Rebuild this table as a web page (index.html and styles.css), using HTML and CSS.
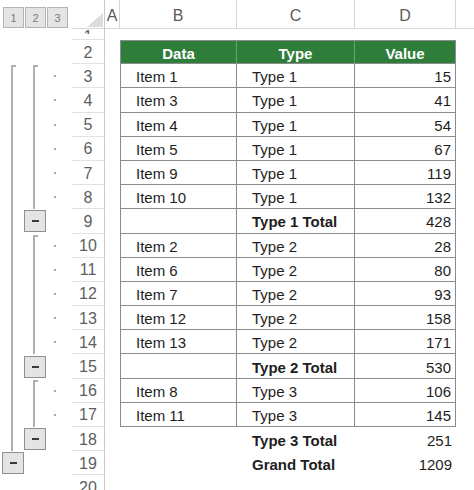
FILE: index.html
```html
<!DOCTYPE html>
<html>
<head>
<meta charset="utf-8">
<link rel="stylesheet" href="styles.css">
</head>
<body>
<div class="sheet">
  <div class="row head">
    <div class="levels"><span class="lv">1</span><span class="lv">2</span><span class="lv">3</span></div>
    <div class="corner"><i class="tri"></i></div>
    <div class="hc">A</div>
    <div class="hc">B</div>
    <div class="hc">C</div>
    <div class="hc">D</div>
    <div class="hc last"></div>
  </div>
  <div class="row r1">
    <div class="o o1"></div><div class="o o2"></div><div class="o o3"></div>
    <div class="rh rh1"><span>1</span></div>
    <div class="ca"></div><div></div><div></div><div></div><div></div>
  </div>
  <div class="row">
    <div class="o o1"></div><div class="o o2"></div><div class="o o3"></div>
    <div class="rh">2</div>
    <div class="ca"></div>
    <div class="c bd th first top">Data</div>
    <div class="c bd th top">Type</div>
    <div class="c bd th top">Value</div>
    <div></div>
  </div>
  <div class="row">
    <div class="o o1"><i class="s"></i></div><div class="o o2"><i class="s"></i></div><div class="o o3"><i class="d"></i></div>
    <div class="rh">3</div><div class="ca"></div>
    <div class="c bd first lt">Item 1</div><div class="c bd lt">Type 1</div><div class="c bd rt">15</div><div></div>
  </div>
  <div class="row">
    <div class="o o1"><i class="v"></i></div><div class="o o2"><i class="v"></i></div><div class="o o3"><i class="d"></i></div>
    <div class="rh">4</div><div class="ca"></div>
    <div class="c bd first lt">Item 3</div><div class="c bd lt">Type 1</div><div class="c bd rt">41</div><div></div>
  </div>
  <div class="row">
    <div class="o o1"><i class="v"></i></div><div class="o o2"><i class="v"></i></div><div class="o o3"><i class="d"></i></div>
    <div class="rh">5</div><div class="ca"></div>
    <div class="c bd first lt">Item 4</div><div class="c bd lt">Type 1</div><div class="c bd rt">54</div><div></div>
  </div>
  <div class="row">
    <div class="o o1"><i class="v"></i></div><div class="o o2"><i class="v"></i></div><div class="o o3"><i class="d"></i></div>
    <div class="rh">6</div><div class="ca"></div>
    <div class="c bd first lt">Item 5</div><div class="c bd lt">Type 1</div><div class="c bd rt">67</div><div></div>
  </div>
  <div class="row">
    <div class="o o1"><i class="v"></i></div><div class="o o2"><i class="v"></i></div><div class="o o3"><i class="d"></i></div>
    <div class="rh">7</div><div class="ca"></div>
    <div class="c bd first lt">Item 9</div><div class="c bd lt">Type 1</div><div class="c bd rt">119</div><div></div>
  </div>
  <div class="row">
    <div class="o o1"><i class="v"></i></div><div class="o o2"><i class="v"></i></div><div class="o o3"><i class="d"></i></div>
    <div class="rh">8</div><div class="ca"></div>
    <div class="c bd first lt">Item 10</div><div class="c bd lt">Type 1</div><div class="c bd rt">132</div><div></div>
  </div>
  <div class="row">
    <div class="o o1"><i class="v"></i></div><div class="o o2"><b class="mb"></b></div><div class="o o3"></div>
    <div class="rh">9</div><div class="ca"></div>
    <div class="c bd first lt"></div><div class="c bd lt bold">Type 1 Total</div><div class="c bd rt">428</div><div></div>
  </div>
  <div class="row">
    <div class="o o1"><i class="v"></i></div><div class="o o2"><i class="s"></i></div><div class="o o3"><i class="d"></i></div>
    <div class="rh">10</div><div class="ca"></div>
    <div class="c bd first lt">Item 2</div><div class="c bd lt">Type 2</div><div class="c bd rt">28</div><div></div>
  </div>
  <div class="row">
    <div class="o o1"><i class="v"></i></div><div class="o o2"><i class="v"></i></div><div class="o o3"><i class="d"></i></div>
    <div class="rh">11</div><div class="ca"></div>
    <div class="c bd first lt">Item 6</div><div class="c bd lt">Type 2</div><div class="c bd rt">80</div><div></div>
  </div>
  <div class="row">
    <div class="o o1"><i class="v"></i></div><div class="o o2"><i class="v"></i></div><div class="o o3"><i class="d"></i></div>
    <div class="rh">12</div><div class="ca"></div>
    <div class="c bd first lt">Item 7</div><div class="c bd lt">Type 2</div><div class="c bd rt">93</div><div></div>
  </div>
  <div class="row">
    <div class="o o1"><i class="v"></i></div><div class="o o2"><i class="v"></i></div><div class="o o3"><i class="d"></i></div>
    <div class="rh">13</div><div class="ca"></div>
    <div class="c bd first lt">Item 12</div><div class="c bd lt">Type 2</div><div class="c bd rt">158</div><div></div>
  </div>
  <div class="row">
    <div class="o o1"><i class="v"></i></div><div class="o o2"><i class="v"></i></div><div class="o o3"><i class="d"></i></div>
    <div class="rh">14</div><div class="ca"></div>
    <div class="c bd first lt">Item 13</div><div class="c bd lt">Type 2</div><div class="c bd rt">171</div><div></div>
  </div>
  <div class="row">
    <div class="o o1"><i class="v"></i></div><div class="o o2"><b class="mb"></b></div><div class="o o3"></div>
    <div class="rh">15</div><div class="ca"></div>
    <div class="c bd first lt"></div><div class="c bd lt bold">Type 2 Total</div><div class="c bd rt">530</div><div></div>
  </div>
  <div class="row">
    <div class="o o1"><i class="v"></i></div><div class="o o2"><i class="s"></i></div><div class="o o3"><i class="d"></i></div>
    <div class="rh">16</div><div class="ca"></div>
    <div class="c bd first lt">Item 8</div><div class="c bd lt">Type 3</div><div class="c bd rt">106</div><div></div>
  </div>
  <div class="row">
    <div class="o o1"><i class="v"></i></div><div class="o o2"><i class="v"></i></div><div class="o o3"><i class="d"></i></div>
    <div class="rh">17</div><div class="ca"></div>
    <div class="c bd first lt">Item 11</div><div class="c bd lt">Type 3</div><div class="c bd rt">145</div><div></div>
  </div>
  <div class="row">
    <div class="o o1"><i class="v"></i></div><div class="o o2"><b class="mb"></b></div><div class="o o3"></div>
    <div class="rh">18</div><div class="ca"></div>
    <div class="c lt"></div><div class="c lt bold">Type 3 Total</div><div class="c rt">251</div><div></div>
  </div>
  <div class="row">
    <div class="o o1"><b class="mb"></b></div><div class="o o2"></div><div class="o o3"></div>
    <div class="rh">19</div><div class="ca"></div>
    <div class="c lt"></div><div class="c lt bold">Grand Total</div><div class="c rt">1209</div><div></div>
  </div>
  <div class="row">
    <div class="o o1"></div><div class="o o2"></div><div class="o o3"></div>
    <div class="rh">20</div><div class="ca"></div>
    <div></div><div></div><div></div><div></div>
  </div>
</div>
</body>
</html>
```
FILE: styles.css
```css
* { box-sizing: border-box; }
body {
  margin: 0;
  background: #fff;
  font-family: "Liberation Sans", Arial, sans-serif;
}
.sheet {
  width: 474px;
  height: 490px;
  overflow: hidden;
}
.row {
  display: grid;
  grid-template-columns: 24px 22px 26px 33px 15px 117px 118px 101px 1fr;
  height: 24.2px;
}
.row.head { height: 29px; }
.row.r1 { height: 11px; }

/* level buttons */
.levels {
  grid-column: span 3;
  display: flex;
  gap: 1px;
  padding: 7px 0 0 3px;
}
.lv {
  width: 21px;
  height: 21px;
  border: 1px solid #b4b4b4;
  background: #e4e4e4;
  color: #7a7a7a;
  font-size: 11px;
  display: flex;
  align-items: center;
  justify-content: center;
}
.corner {
  border-right: 1px solid #c9c9c9;
  border-bottom: 1px solid #d6d6d6;
  display: flex;
  justify-content: flex-end;
  align-items: flex-end;
  padding: 0 1px 1px 0;
}
.tri {
  width: 16px;
  height: 14px;
  background: #dcdcdc;
  clip-path: polygon(100% 0, 100% 100%, 0 100%);
}
.hc {
  border-right: 1px solid #d6d6d6;
  border-bottom: 1px solid #d6d6d6;
  color: #5b5b5b;
  font-size: 16px;
  display: flex;
  align-items: center;
  justify-content: center;
  padding-top: 3px;
}
.hc.last { border-right: none; }

/* outline gutter */
.o { display: flex; }
.v, .s {
  width: 2px;
  background: #b0b0b0;
}
.s {
  position: relative;
  margin-top: 1px;
}
.s::before {
  content: "";
  position: absolute;
  left: 0;
  top: 0;
  width: 5px;
  height: 2px;
  background: #b0b0b0;
}
.o1 .v, .o1 .s { margin-left: 11px; }
.o2 .v, .o2 .s { margin-left: 9px; }
.d {
  width: 2px;
  height: 2px;
  background: #a8a8a8;
  align-self: center;
  margin-left: 8px;
}
.mb {
  width: 22px;
  height: 22px;
  align-self: center;
  border: 1px solid #8f8f8f;
  background: #e4e4e4;
  display: flex;
  align-items: center;
  justify-content: center;
}
.mb::before {
  content: "";
  width: 7px;
  height: 2px;
  background: #3a3a3a;
}
.o1 .mb { margin-left: 2px; }
.o2 .mb { margin-left: 0; width: 23px; }

/* row headers */
.rh {
  border-right: 1px solid #c9c9c9;
  border-bottom: 1px solid #e2e2e2;
  color: #5e5e5e;
  font-size: 16px;
  display: flex;
  align-items: center;
  justify-content: center;
  padding-top: 2px;
}
.rh1 {
  align-items: flex-start;
  padding-top: 0;
}
.rh1 span {
  display: block;
  height: 5px;
  overflow: hidden;
  line-height: 16px;
}

/* cells */
.c {
  display: flex;
  align-items: center;
  padding-top: 2px;
  font-size: 15px;
  color: #1e1e1e;
  white-space: nowrap;
}
.bd {
  border-right: 1px solid #8c8c8c;
  border-bottom: 1px solid #8c8c8c;
}
.first { border-left: 1px solid #8c8c8c; }
.top { border-top: 1px solid #8c8c8c; }
.lt { padding-left: 15px; }
.rt { justify-content: flex-end; padding-right: 4px; }
.bold { font-weight: bold; }
.th {
  background: #2f7d3b;
  color: #fff;
  font-weight: bold;
  justify-content: center;
  border-right-color: #6f9f77;
}
.th:last-child, .th + .th + .th { border-right-color: #8c8c8c; }
```
